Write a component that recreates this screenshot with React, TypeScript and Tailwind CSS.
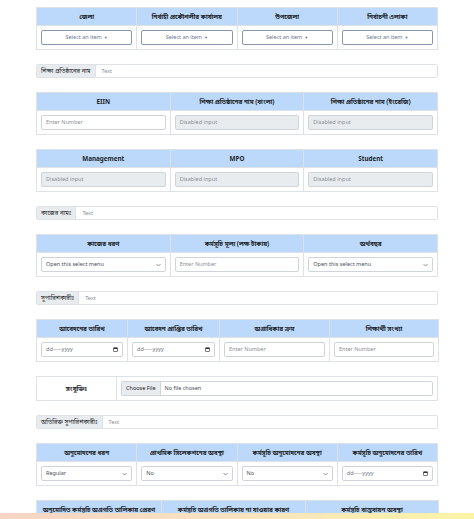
import React from 'react';

const font = { fontFamily: '"Noto Sans", "Noto Sans Bengali", "Lohit Bengali", "Open Sans", sans-serif' };

function Chevron() {
  return (
    <svg width="5" height="4" viewBox="0 0 10 6" className="shrink-0">
      <path d="M1 1l4 4 4-4" fill="none" stroke="#6b7280" strokeWidth="1.5" />
    </svg>
  );
}

function CalendarIcon() {
  return (
    <svg width="5" height="5" viewBox="0 0 10 10" className="shrink-0">
      <rect x="1" y="1.5" width="8" height="7.5" rx="1" fill="none" stroke="#333" strokeWidth="1.3" />
      <rect x="1" y="1.5" width="8" height="2.5" fill="#333" />
    </svg>
  );
}

function Th({ children }: { children: React.ReactNode }) {
  return (
    <th className="h-[18px] border border-[#dee2e6] bg-[#bcd9fb] px-1 text-center align-middle text-[6.3px] font-bold text-[#212529]">
      {children}
    </th>
  );
}

function Td({ children }: { children: React.ReactNode }) {
  return <td className="h-[24px] border border-[#dee2e6] bg-white px-[4px] align-middle">{children}</td>;
}

function ItemSelect() {
  return (
    <div className="flex h-[15px] w-full items-center justify-center gap-[2px] rounded-[2px] border border-[#8a97aa] bg-white text-[5.5px] text-[#6a7892]">
      Select an item <span className="text-[4px]">▼</span>
    </div>
  );
}

function NumberInput() {
  return (
    <div className="flex h-[15px] w-full items-center rounded-[2px] border border-[#ced4da] bg-white px-[4px] text-[5.5px] text-[#8a8f96]">
      Enter Number
    </div>
  );
}

function DisabledInput() {
  return (
    <div className="flex h-[15px] w-full items-center rounded-[2px] border border-[#ced4da] bg-[#e9ecef] px-[4px] text-[5.5px] text-[#8a8f96]">
      Disabled input
    </div>
  );
}

function SelectMenu({ label }: { label: string }) {
  return (
    <div className="flex h-[15px] w-full items-center justify-between rounded-[2px] border border-[#ced4da] bg-white px-[4px] text-[5.5px] text-[#495057]">
      <span>{label}</span>
      <Chevron />
    </div>
  );
}

function DateInput() {
  return (
    <div className="flex h-[15px] w-full items-center justify-between rounded-[2px] border border-[#ced4da] bg-white px-[4px] text-[5.5px] text-[#6c757d]">
      <span>dd-----yyyy</span>
      <CalendarIcon />
    </div>
  );
}

function InputGroup({ label }: { label: string }) {
  return (
    <div className="flex h-[14px] w-full overflow-hidden rounded-[2px] border border-[#dee2e6]">
      <div className="flex items-center whitespace-nowrap border-r border-[#dee2e6] bg-[#e9ecef] px-[4px] text-[6px] text-[#212529]">{label}</div>
      <div className="flex flex-1 items-center bg-white px-[6px] text-[5.5px] text-[#8a8f96]">Text</div>
    </div>
  );
}

export default function App() {
  return (
    <div className="relative min-h-[519px] bg-white" style={font}>
      <div className="mx-auto flex w-[402px] flex-col gap-[14px] pt-[7px]">
        <table className="w-full table-fixed border-collapse">
          <thead>
            <tr>
              <Th>জেলা</Th>
              <Th>নির্বাহী প্রকৌশলীর কার্যালয়</Th>
              <Th>উপজেলা</Th>
              <Th>নির্বাচনী এলাকা</Th>
            </tr>
          </thead>
          <tbody>
            <tr>
              <Td><ItemSelect /></Td>
              <Td><ItemSelect /></Td>
              <Td><ItemSelect /></Td>
              <Td><ItemSelect /></Td>
            </tr>
          </tbody>
        </table>

        <InputGroup label="শিক্ষা প্রতিষ্ঠানের নাম" />

        <table className="w-full table-fixed border-collapse">
          <thead>
            <tr>
              <Th>EIIN</Th>
              <Th>শিক্ষা প্রতিষ্ঠানের নাম (বাংলা)</Th>
              <Th>শিক্ষা প্রতিষ্ঠানের নাম (ইংরেজি)</Th>
            </tr>
          </thead>
          <tbody>
            <tr>
              <Td><NumberInput /></Td>
              <Td><DisabledInput /></Td>
              <Td><DisabledInput /></Td>
            </tr>
          </tbody>
        </table>

        <table className="w-full table-fixed border-collapse">
          <thead>
            <tr>
              <Th>Management</Th>
              <Th>MPO</Th>
              <Th>Student</Th>
            </tr>
          </thead>
          <tbody>
            <tr>
              <Td><DisabledInput /></Td>
              <Td><DisabledInput /></Td>
              <Td><DisabledInput /></Td>
            </tr>
          </tbody>
        </table>

        <InputGroup label="কাজের নামঃ" />

        <table className="w-full table-fixed border-collapse">
          <thead>
            <tr>
              <Th>কাজের ধরণ</Th>
              <Th>কর্মসূচি মূল্য (লক্ষ টাকায়)</Th>
              <Th>অর্থবছর</Th>
            </tr>
          </thead>
          <tbody>
            <tr>
              <Td><SelectMenu label="Open this select menu" /></Td>
              <Td><NumberInput /></Td>
              <Td><SelectMenu label="Open this select menu" /></Td>
            </tr>
          </tbody>
        </table>

        <InputGroup label="সুপারিশকারীঃ" />

        <table className="w-full table-fixed border-collapse">
          <colgroup>
            <col className="w-[91px]" />
            <col className="w-[92px]" />
            <col className="w-[110px]" />
            <col className="w-[109px]" />
          </colgroup>
          <thead>
            <tr>
              <Th>আবেদনের তারিখ</Th>
              <Th>আবেদন প্রাপ্তির তারিখ</Th>
              <Th>অগ্রাধিকার ক্রম</Th>
              <Th>শিক্ষার্থী সংখ্যা</Th>
            </tr>
          </thead>
          <tbody>
            <tr>
              <Td><DateInput /></Td>
              <Td><DateInput /></Td>
              <Td><NumberInput /></Td>
              <Td><NumberInput /></Td>
            </tr>
          </tbody>
        </table>

        <table className="w-full table-fixed border-collapse">
          <colgroup>
            <col className="w-[80px]" />
            <col />
          </colgroup>
          <tbody>
            <tr>
              <td className="h-[24px] border border-[#dee2e6] text-center align-middle text-[6.3px] font-bold text-[#212529]">সংযুক্তিঃ</td>
              <td className="h-[24px] border border-[#dee2e6] px-[4px] align-middle">
                <div className="flex h-[15px] w-full overflow-hidden rounded-[2px] border border-[#ced4da] text-[5.5px]">
                  <div className="flex items-center border-r border-[#ced4da] bg-[#e9ecef] px-[4px] text-[#212529]">Choose File</div>
                  <div className="flex items-center bg-white px-[4px] text-[#495057]">No file chosen</div>
                </div>
              </td>
            </tr>
          </tbody>
        </table>

        <InputGroup label="অতিরিক্ত সুপারিশকারীঃ" />

        <table className="w-full table-fixed border-collapse">
          <thead>
            <tr>
              <Th>অনুমোদনের ধরন</Th>
              <Th>প্রাথমিক সিলেকশনের অবস্থা</Th>
              <Th>কর্মসূচি অনুমোদনের অবস্থা</Th>
              <Th>কর্মসূচি অনুমোদনের তারিখ</Th>
            </tr>
          </thead>
          <tbody>
            <tr>
              <Td><SelectMenu label="Regular" /></Td>
              <Td><SelectMenu label="No" /></Td>
              <Td><SelectMenu label="No" /></Td>
              <Td><DateInput /></Td>
            </tr>
          </tbody>
        </table>

        <table className="w-full table-fixed border-collapse">
          <colgroup>
            <col className="w-[125px]" />
            <col className="w-[144px]" />
            <col className="w-[133px]" />
          </colgroup>
          <thead>
            <tr>
              <Th>অনুমোদিত কর্মসূচি অগ্রগতি তালিকায় প্রেরণ</Th>
              <Th>কর্মসূচি অগ্রগতি তালিকায় না যাওয়ার কারণ</Th>
              <Th>কর্মসূচি বাস্তবায়ন অবস্থা</Th>
            </tr>
          </thead>
          <tbody>
            <tr>
              <Td><SelectMenu label="No" /></Td>
              <Td><NumberInput /></Td>
              <Td><SelectMenu label="No" /></Td>
            </tr>
          </tbody>
        </table>
      </div>
      <div className="fixed bottom-0 left-0 h-[6px] w-full bg-gradient-to-r from-[#f6d5c4] via-[#f8e3bf] to-[#fbf4a6]" />
    </div>
  );
}
